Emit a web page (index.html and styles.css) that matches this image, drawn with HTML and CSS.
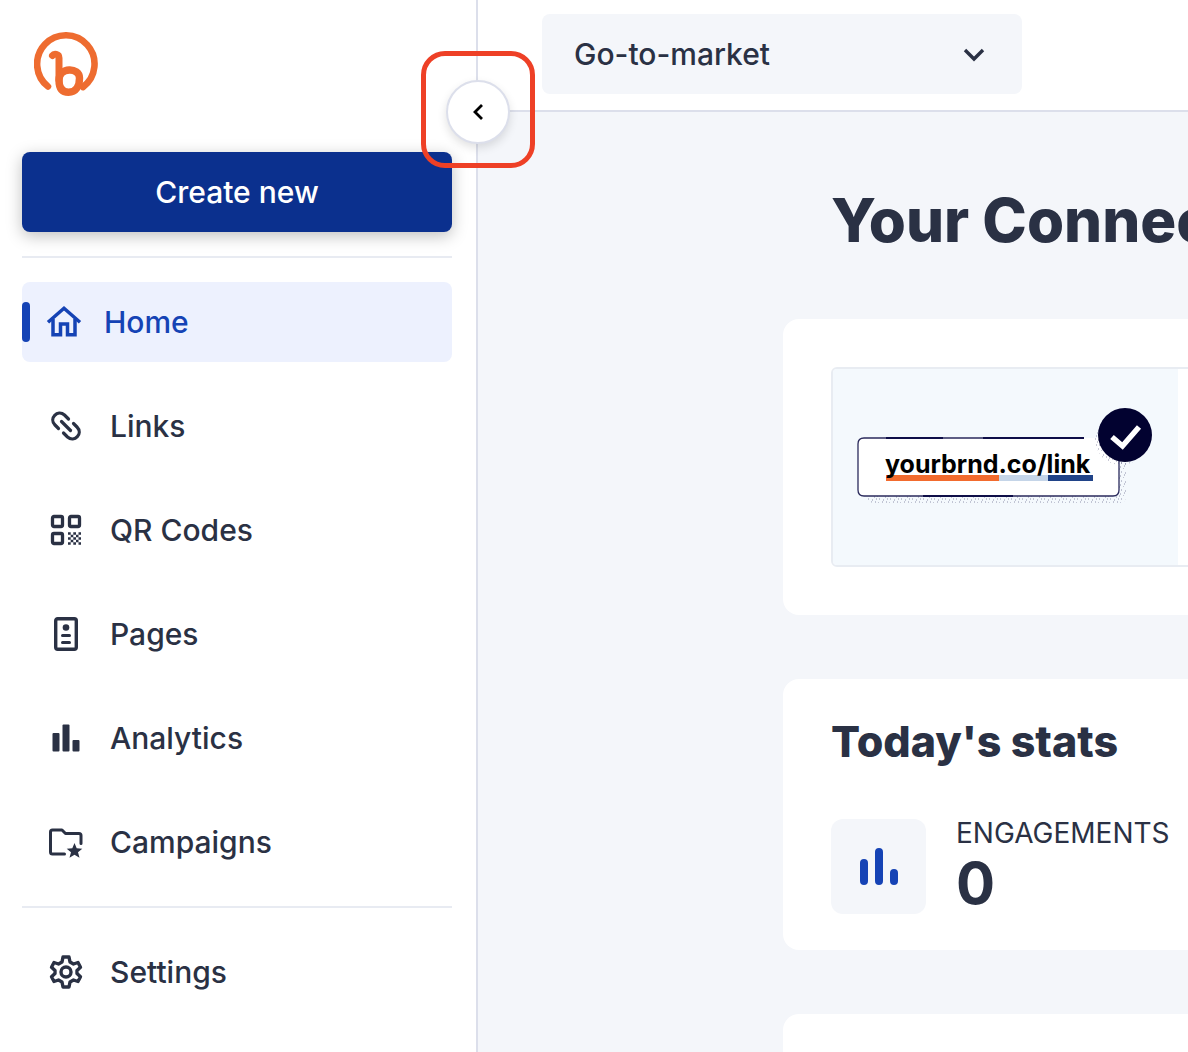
FILE: index.html
```html
<!DOCTYPE html>
<html lang="en">

<head>
  <meta charset="UTF-8">
  <title>Home</title>
  <link rel="stylesheet" href="styles.css">
</head>

<body>

  <div class="app">
    <aside class="sidebar">
      <a class="logo" href="#" aria-label="Home page">
        <svg viewBox="0 0 64 64" width="64" height="64" fill="none" stroke="#ee6c30" stroke-linecap="round" stroke-linejoin="round">
          <path d="M14 54.500A28.700 28.700 0 1 1 49 55" stroke-width="6.600" />
          <path d="M18.500 23.500C20 21.500 25 21.500 25 26V48" stroke-width="7" />
          <path d="M25 48C25 35 45.500 35 45.500 46C45.500 54 42 60.300 34.500 60.300C28 60.300 25 56 25 48" stroke-width="7.400" />
        </svg>
      </a>

      <button class="create" type="button">Create new</button>

      <nav class="nav">
        <a class="nav-item active" href="#">
          <svg class="icon" viewBox="0 0 36 36" fill="none" stroke="currentColor" stroke-width="3.500">
            <path d="M2 18.300L18 4.300L34 18.300" />
            <path d="M7 15V30.800H14.500V20H21.500V30.800H29V15" />
          </svg>
          Home
        </a>
        <a class="nav-item" href="#">
          <svg class="icon" viewBox="0 0 36 36" fill="none" stroke="currentColor" stroke-width="3.200" stroke-linecap="round">
            <path d="M10.500 20.500L7 17C0.500 10.500 9.500 1 16.500 7L20.500 11" />
            <path d="M13.500 13.500L22.500 22.500" />
            <path d="M25.500 15.500L29 19C35.500 25.500 26.500 35 19.500 29L15.500 25" />
          </svg>
          Links
        </a>
        <a class="nav-item" href="#">
          <svg class="icon" viewBox="0 0 36 36" fill="none" stroke="currentColor" stroke-width="3.300">
            <rect x="4.500" y="4.500" width="10" height="10" rx="1.500" />
            <rect x="21.500" y="4.500" width="10" height="10" rx="1.500" />
            <rect x="4.500" y="21.500" width="10" height="10" rx="1.500" />
            <path d="M20 21.500H22.700M25.300 21.500H28M30.500 21.500H33M22.700 24H25.300M28 24H30.500M20 26.500H22.700M25.300 26.500H28M30.500 26.500H33M22.700 29H25.300M28 29H30.500M20 31.500H22.700M25.300 31.500H28M30.500 31.500H33" stroke-width="2.600" />
          </svg>
          QR Codes
        </a>
        <a class="nav-item" href="#">
          <svg class="icon" viewBox="0 0 36 36" fill="none" stroke="currentColor" stroke-width="3.400" stroke-linecap="round">
            <rect x="7.700" y="2.700" width="20.600" height="30.600" rx="2" />
            <circle cx="18" cy="11.500" r="3.300" fill="currentColor" stroke="none" />
            <path d="M14.500 19.500H21.500M14.500 26.500H21.500" stroke-width="3" />
          </svg>
          Pages
        </a>
        <a class="nav-item" href="#">
          <svg class="icon" viewBox="0 0 36 36" fill="currentColor">
            <rect x="4.500" y="13" width="7" height="18.500" rx="1" />
            <rect x="14.500" y="4.500" width="7" height="27" rx="1" />
            <rect x="24.500" y="20" width="7" height="11.500" rx="1" />
          </svg>
          Analytics
        </a>
        <a class="nav-item" href="#">
          <svg class="icon" viewBox="0 0 36 36" fill="none" stroke="currentColor" stroke-width="3" stroke-linecap="round" stroke-linejoin="round">
            <path d="M16.500 30H4.500Q2.500 30 2.500 28V8Q2.500 6 4.500 6H14L17.500 9.500H31Q33 9.500 33 11.500V19.500" />
            <path d="M26.500 19L28.700 24.300L34.300 24.700L30 28.300L31.500 33.800L26.500 30.700L21.500 33.800L23 28.300L18.700 24.700L24.300 24.300Z" fill="currentColor" stroke="none" />
          </svg>
          Campaigns
        </a>
      </nav>

      <nav class="nav">
        <a class="nav-item" href="#">
          <svg class="icon" viewBox="0 0 36 36" fill="none" stroke="currentColor" stroke-width="3.400" stroke-linejoin="round">
            <path d="M15 3H21L22 8L25.500 10L30 8.500L32.500 13.200L29 16.500V19.500L32.500 22.800L30 27.500L25.500 26L22 28L21 33H15L14 28L10.500 26L6 27.500L3.500 22.800L7 19.500V16.500L3.500 13.200L6 8.500L10.500 10L14 8Z" />
            <circle cx="18" cy="18" r="5" />
          </svg>
          Settings
        </a>
      </nav>

      <div class="collapse">
        <button class="collapse-btn" type="button" aria-label="Collapse menu">
          <svg viewBox="0 0 20 20" width="20" height="20" fill="none" stroke="#000" stroke-width="2.800">
            <path d="M14 3L7 10L14 17" />
          </svg>
        </button>
      </div>
    </aside>

    <div class="main">
      <header class="topbar">
        <div class="group">
          <select class="group-select" aria-label="Group">
            <option>Go-to-market</option>
          </select>
          <svg class="chevron" viewBox="0 0 24 24" width="24" height="24" fill="none" stroke="currentColor" stroke-width="3.400">
            <path d="M3 8L12 17L21 8" />
          </svg>
        </div>
      </header>

      <main class="content">
        <h1>Your Connections Platform</h1>

        <section class="card">
          <div class="promo">
            <svg class="promo-art" viewBox="0 0 345 196" width="345" height="196">
              <defs>
                <pattern id="dots" width="11" height="9" patternUnits="userSpaceOnUse">
                  <path d="M0 1h1M4 0h1M8 2h1M2 4h1M6 5h1M10 4h1M1 8h1M5 7h1M9 7h1" stroke="#3d3d68" stroke-width="0.800" opacity="0.700" />
                </pattern>
              </defs>
              <rect x="34" y="75" width="259" height="59" rx="6" fill="url(#dots)" />
              <rect x="25" y="69" width="261" height="58" rx="6" fill="#fff" />
              <path d="M251 69H31Q25 69 25 75V121Q25 127 31 127H280Q286 127 286 121V88" fill="none" stroke="#2a2a5c" stroke-width="1.300" />
              <path d="M53 69H110M150 69H251M90 127H180" stroke="#0e0e48" stroke-width="1.800" />
              <circle cx="288" cy="70" r="26" fill="url(#dots)" />
              <rect x="53" y="106" width="113" height="6" fill="#f26b2e" />
              <rect x="166" y="106" width="49" height="6" fill="#c5d5e8" />
              <rect x="215" y="106" width="45" height="6" fill="#204388" />
              <text class="promo-link" x="52" y="104">yourbrnd.co/link</text>
              <circle cx="292" cy="66" r="27" fill="#020230" />
              <path d="M279 68L289.500 77L306 58" fill="none" stroke="#fff" stroke-width="5.500" />
            </svg>
          </div>
        </section>

        <section class="card stats">
          <h2>Today's stats</h2>
          <div class="stat">
            <div class="stat-icon">
              <svg viewBox="0 0 40 40" width="40" height="40" fill="none" stroke="#1543b5" stroke-width="8" stroke-linecap="round">
                <path d="M5 16V34M20 5V34M35 26V34" />
              </svg>
            </div>
            <div>
              <div class="stat-label">ENGAGEMENTS</div>
              <div class="stat-value">0</div>
            </div>
          </div>
        </section>

        <section class="card"></section>
      </main>
    </div>
  </div>

</body>

</html>
```
FILE: styles.css
```css
* {
  box-sizing: border-box;
}

body {
  margin: 0;
  font-family: Inter, "Liberation Sans", sans-serif;
  font-size: 30px;
  font-weight: 500;
  color: #2a3144;
  background: #f4f6fa;
}

.app {
  display: flex;
  height: 100vh;
  overflow: hidden;
}

/* sidebar */
.sidebar {
  position: relative;
  z-index: 1;
  flex: none;
  width: 478px;
  padding: 32px 24px 0 22px;
  background: #fff;
  border-right: 2px solid #dcdfeb;
}

.logo {
  display: block;
  height: 64px;
  margin: 0 12px 56px;
}

.create {
  display: block;
  width: 100%;
  height: 80px;
  margin-bottom: 24px;
  font: inherit;
  color: #fff;
  background: #0b308e;
  border: none;
  border-radius: 8px;
  box-shadow: 0 4px 16px rgba(0, 0, 0, 0.25);
  cursor: pointer;
}

.nav {
  display: flex;
  flex-direction: column;
  gap: 24px;
  padding: 24px 0;
  border-top: 2px solid #e8ebf2;
}

.nav-item {
  display: flex;
  align-items: center;
  gap: 26px;
  height: 80px;
  padding-left: 26px;
  color: inherit;
  text-decoration: none;
  border-radius: 8px;
}

.nav-item.active {
  gap: 22px;
  padding-left: 0;
  color: #1543b5;
  background: #edf1fe;
}

.nav-item.active::before {
  content: "";
  width: 8px;
  height: 40px;
  margin-right: -6px;
  background: #1543b5;
  border-radius: 4px;
}

.icon {
  flex: none;
  width: 36px;
  height: 36px;
}

/* highlighted collapse button on the sidebar edge */
.collapse {
  position: absolute;
  top: 51px;
  right: -59px;
  display: flex;
  align-items: center;
  justify-content: center;
  width: 114px;
  height: 117px;
  padding-top: 5px;
  border: 5px solid #ee4026;
  border-radius: 24px;
}

.collapse-btn {
  display: flex;
  align-items: center;
  justify-content: center;
  width: 64px;
  height: 64px;
  padding: 0;
  background: #fff;
  border: 2px solid #dcdfeb;
  border-radius: 50%;
  box-shadow: 0 4px 10px rgba(0, 0, 0, 0.12);
  cursor: pointer;
}

/* top bar */
.main {
  flex: 1;
  min-width: 0;
  overflow: hidden;
}

.topbar {
  height: 112px;
  padding: 14px 64px;
  background: #fff;
  border-bottom: 2px solid #dcdfeb;
}

.group {
  position: relative;
  max-width: 480px;
}

.group-select {
  width: 100%;
  height: 80px;
  padding: 0 32px;
  font: inherit;
  color: inherit;
  background: #f4f6fa;
  border: none;
  border-radius: 8px;
  appearance: none;
}

.chevron {
  position: absolute;
  top: 28px;
  right: 36px;
  pointer-events: none;
}

/* dashboard */
.content {
  min-width: 1200px;
  padding: 64px 64px 64px 305px;
}

h1 {
  margin: 0 48px 55px;
  font-size: 60px;
  font-weight: 800;
  line-height: 88px;
  white-space: nowrap;
}

h2 {
  margin: 0 0 52px;
  font-size: 43px;
  font-weight: 800;
  line-height: 52px;
}

.card {
  min-height: 160px;
  margin-bottom: 64px;
  padding: 48px;
  background: #fff;
  border-radius: 16px;
}

.promo {
  height: 200px;
  overflow: hidden;
  border: 2px solid #e8ecf2;
  border-radius: 6px;
}

.promo-art {
  display: block;
  background: #f4f9fd;
}

.promo-link {
  font-size: 25px;
  font-weight: 700;
  fill: #000;
}

.stats {
  padding: 36px 48px 30px;
}

.stat {
  display: flex;
  align-items: flex-start;
  gap: 30px;
}

.stat-icon {
  display: flex;
  align-items: center;
  justify-content: center;
  width: 95px;
  height: 95px;
  background: #f4f6fa;
  border-radius: 12px;
}

.stat-label {
  font-size: 28px;
  font-weight: 400;
  line-height: 28px;
}

.stat-value {
  font-size: 58px;
  font-weight: 700;
  line-height: 73px;
}
```
